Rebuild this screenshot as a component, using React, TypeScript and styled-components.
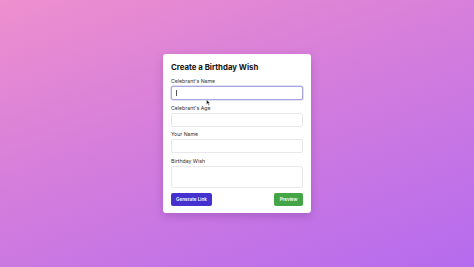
import React from "react";
import styled, { createGlobalStyle } from "styled-components";

const GlobalStyle = createGlobalStyle`
  html, body, #root {
    margin: 0;
    padding: 0;
    height: 100%;
  }
  body {
    font-family: Inter, "Liberation Sans", sans-serif;
  }
`;

const fields = [
  { label: "Celebrant's Name", focused: true },
  { label: "Celebrant's Age" },
  { label: "Your Name" },
];

const App = () => {
  return (
    <>
      <GlobalStyle />
      <Page>
        <Card>
          <Title>Create a Birthday Wish</Title>
          {fields.map((field, index) => (
            <Field key={index}>
              <Label>{field.label}</Label>
              <InputWrap>
                <Input $focused={field.focused} />
                {field.focused && <Caret />}
                {field.focused && (
                  <Pointer width="5" height="7" viewBox="0 0 6 8">
                    <path d="M0.5 0.5 L0.5 6.5 L2 5.2 L3.2 7.5 L4.2 7 L3 4.8 L5 4.8 Z" fill="#111" stroke="#fff" strokeWidth="0.6" />
                  </Pointer>
                )}
              </InputWrap>
            </Field>
          ))}
          <Field>
            <Label>Birthday Wish</Label>
            <TextArea />
          </Field>
          <ButtonRow>
            <Button $color="#4530d0" $width={41}>Generate Link</Button>
            <Button $color="#44a547" $width={29}>Preview</Button>
          </ButtonRow>
        </Card>
      </Page>
    </>
  );
};

const Page = styled.div`
  width: 474px;
  height: 267px;
  display: flex;
  align-items: center;
  justify-content: center;
  background: linear-gradient(160deg, #ee8fce 0%, #d47ddc 45%, #b56bee 100%);
  overflow: hidden;
  font-size: 6px;
`;

const Card = styled.div`
  width: 132px;
  padding: 8px 8px 7px;
  background: #fff;
  border-radius: 3px;
  box-shadow: 0 3px 8px rgba(80, 30, 110, 0.25);
  display: flex;
  flex-direction: column;
  font-size: 6px;
  line-height: 7px;
`;

const Title = styled.h2`
  margin: 0 0 5px;
  font-size: 7.8px;
  font-weight: 700;
  color: #111;
  line-height: 11px;
`;

const Field = styled.div`
  display: flex;
  flex-direction: column;
  margin-bottom: 4.5px;
`;

const Label = styled.label`
  display: block;
  font-size: 5.2px;
  line-height: 6px;
  color: #333;
  margin-bottom: 2px;
`;

const InputWrap = styled.div`
  position: relative;
  display: flex;
`;

const Input = styled.input<{ $focused?: boolean }>`
  display: block;
  box-sizing: border-box;
  width: 100%;
  height: 14px;
  margin: 0;
  padding: 0 3px;
  border: 1px solid ${(p) => (p.$focused ? "#aaa6e0" : "#e8e8ec")};
  box-shadow: ${(p) => (p.$focused ? "0 0 0 0.5px #c4c0ec" : "none")};
  border-radius: 2px;
  outline: none;
  background: #fff;
  font-size: 6px;
`;

const Caret = styled.span`
  position: absolute;
  left: 4.5px;
  top: 4px;
  width: 0.5px;
  height: 6px;
  background: #555;
`;

const Pointer = styled.svg`
  position: absolute;
  left: 35px;
  top: 12.5px;
`;

const TextArea = styled.textarea`
  display: block;
  box-sizing: border-box;
  width: 100%;
  height: 22px;
  margin: 0;
  padding: 2px 3px;
  border: 1px solid #e8e8ec;
  border-radius: 2px;
  outline: none;
  resize: none;
  font-size: 6px;
`;

const ButtonRow = styled.div`
  display: flex;
  justify-content: space-between;
  margin-top: 1px;
`;

const Button = styled.button<{ $color: string; $width: number }>`
  width: ${(p) => p.$width}px;
  height: 12.5px;
  padding: 0;
  border: none;
  border-radius: 2px;
  background: ${(p) => p.$color};
  color: #fff;
  font-family: Inter, "Liberation Sans", sans-serif;
  font-size: 4.6px;
  font-weight: 600;
  cursor: pointer;
`;

export default App;
